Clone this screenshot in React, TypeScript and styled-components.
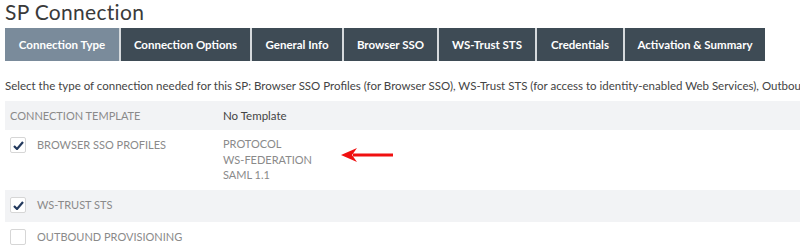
import React from 'react';
import styled, { createGlobalStyle } from 'styled-components';

const GlobalStyle = createGlobalStyle`
  body {
    margin: 0;
    background: #fff;
    font-family: Lato, "Open Sans", Arial, sans-serif;
  }
`;

const Page = styled.div`
  width: 800px;
  height: 248px;
  overflow: hidden;
  padding: 0 0 0 5px;
  box-sizing: border-box;
`;

const Title = styled.h1`
  margin: 0;
  height: 28px;
  font-size: 21px;
  font-weight: 400;
  color: #3a3a3a;
  line-height: 24px;
  letter-spacing: 0.3px;
`;

const Tabs = styled.div`
  display: flex;
  gap: 2px;
  height: 33px;
  background: #d6dadd;
  width: fit-content;
`;

const Tab = styled.div<{ $active?: boolean; $w: number }>`
  width: ${(p) => p.$w}px;
  display: flex;
  align-items: center;
  justify-content: center;
  background: ${(p) => (p.$active ? '#7a8b9b' : '#3e4b55')};
  color: #fff;
  font-size: 11.5px;
  font-weight: 700;
  white-space: nowrap;
`;

const Intro = styled.p`
  margin: 0;
  padding: 18px 0 0 0;
  height: 40px;
  box-sizing: border-box;
  font-size: 11.5px;
  color: #444;
  white-space: nowrap;
`;

const Row = styled.div<{ $shade?: boolean; $h: number }>`
  display: grid;
  grid-template-columns: 218px 1fr;
  height: ${(p) => p.$h}px;
  background: ${(p) => (p.$shade ? '#f2f3f5' : '#fff')};
  box-sizing: border-box;
  padding-top: 7px;
`;

const Label = styled.div`
  display: flex;
  align-items: flex-start;
  gap: 11px;
  padding-left: 5px;
  font-size: 11px;
  color: #8a8a8a;
  text-transform: uppercase;
  line-height: 16px;
`;

const Box = styled.span`
  width: 16px;
  height: 16px;
  box-sizing: border-box;
  border: 1px solid #d6d6d6;
  border-radius: 2px;
  background: #fff;
  display: flex;
  align-items: center;
  justify-content: center;
  flex-shrink: 0;
`;

const Value = styled.div<{ $upper?: boolean }>`
  display: flex;
  align-items: flex-start;
  font-size: ${(p) => (p.$upper ? '11px' : '11.5px')};
  line-height: 16px;
  color: ${(p) => (p.$upper ? '#8a8a8a' : '#444')};
  text-transform: ${(p) => (p.$upper ? 'uppercase' : 'none')};
`;

const Stack = styled.div`
  display: flex;
  flex-direction: column;
  line-height: 15.5px;
  margin-top: -1px;
`;

const Pointer = styled.svg`
  flex: none;
  width: 54px;
  height: 14px;
  margin: 11px 0 0 29px;
`;

const Check = ({ on }: { on: boolean }) => (
  <Box>
    {on && (
      <svg width="11" height="9" viewBox="0 0 11 9">
        <path d="M1 5 L4 8 L10 1" fill="none" stroke="#243a5e" strokeWidth="2.2" />
      </svg>
    )}
  </Box>
);

const tabs: [string, number][] = [
  ['Connection Type', 114],
  ['Connection Options', 129],
  ['General Info', 90],
  ['Browser SSO', 93],
  ['WS-Trust STS', 96],
  ['Credentials', 86],
  ['Activation & Summary', 140],
];

const App: React.FC = () => (
  <Page>
    <GlobalStyle />
    <Title>SP Connection</Title>
    <Tabs>
      {tabs.map(([t, w], i) => (
        <Tab key={t} $w={w} $active={i === 0}>
          {t}
        </Tab>
      ))}
    </Tabs>
    <Intro>
      Select the type of connection needed for this SP: Browser SSO Profiles (for Browser SSO), WS-Trust STS (for access to identity-enabled Web Services), Outbound Provisioning
    </Intro>
    <Row $shade $h={29}>
      <Label>
        <span>Connection Template</span>
      </Label>
      <Value>No Template</Value>
    </Row>
    <Row $h={60}>
      <Label>
        <Check on />
        <span>Browser SSO Profiles</span>
      </Label>
      <Value $upper>
        <Stack>
          <span>Protocol</span>
          <span>WS-Federation</span>
          <span>SAML 1.1</span>
        </Stack>
        <Pointer viewBox="0 0 54 14">
          <path d="M12 7 H52" stroke="#f01010" strokeWidth="3" />
          <path d="M0 7 L16 0 L11 7 L16 14 Z" fill="#f01010" />
        </Pointer>
      </Value>
    </Row>
    <Row $shade $h={32}>
      <Label>
        <Check on />
        <span>WS-Trust STS</span>
      </Label>
      <Value />
    </Row>
    <Row $h={26}>
      <Label>
        <Check on={false} />
        <span>Outbound Provisioning</span>
      </Label>
      <Value />
    </Row>
  </Page>
);

export default App;
